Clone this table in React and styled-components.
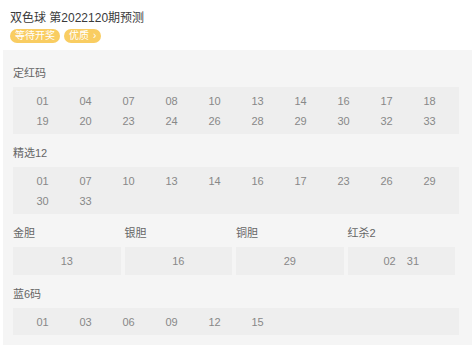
import React from "react";
import styled, { createGlobalStyle } from "styled-components";

const Global = createGlobalStyle`
  html, body { margin: 0; padding: 0; background: #ffffff; }
  body { font-family: "Liberation Sans", "Noto Sans CJK SC", sans-serif; width: 474px; height: 348px; overflow: hidden; }
`;

const Page = styled.div`
  display: flex;
  flex-direction: column;
  height: 348px;
`;

const Header = styled.div`
  padding: 10px 10px 0 10px;
  height: 50px;
  box-sizing: border-box;
`;

const Title = styled.div`
  font-size: 12px;
  line-height: 16px;
  color: #3a3a3a;
`;

const Badges = styled.div`
  display: flex;
  gap: 4px;
  margin-top: 3px;
`;

const Badge = styled.span`
  display: inline-flex;
  align-items: center;
  height: 14px;
  padding: 0 5px;
  border-radius: 7px;
  background: #f9cd62;
  color: #ffffff;
  font-size: 10px;
  line-height: 14px;
`;

const Chevron = styled.span`
  margin-left: 4px;
  font-size: 10px;
`;

const Panel = styled.div`
  margin: 0 2px 0 3px;
  background: #f5f5f5;
  padding: 14px 13px 10px 10px;
  display: flex;
  flex-direction: column;
  gap: 10px;
`;

const Section = styled.div`
  display: flex;
  flex-direction: column;
`;

const Label = styled.div`
  font-size: 11px;
  line-height: 18px;
  color: #666;
  margin-bottom: 5px;
`;

const NumBox = styled.div`
  background: #eeeeee;
  padding: 4px 8px 3px;
  display: flex;
  flex-wrap: wrap;
`;

const Num = styled.span`
  width: 10%;
  text-align: center;
  font-size: 11px;
  line-height: 20px;
  color: #888;
`;

const Quad = styled.div`
  display: grid;
  grid-template-columns: repeat(4, 1fr);
`;

const QuadCell = styled.div`
  padding-right: 4px;
  display: flex;
  flex-direction: column;
`;

const ValueBox = styled.div`
  background: #eeeeee;
  height: 28px;
  line-height: 28px;
  text-align: center;
  font-size: 11px;
  color: #888;
  word-spacing: 8px;
`;

const red = ["01","04","07","08","10","13","14","16","17","18","19","20","23","24","26","28","29","30","32","33"];
const pick = ["01","07","10","13","14","16","17","23","26","29","30","33"];
const blue = ["01","03","06","09","12","15"];
const quads = [
  { label: "金胆", value: "13" },
  { label: "银胆", value: "16" },
  { label: "铜胆", value: "29" },
  { label: "红杀2", value: "02 31" },
];

export default function App() {
  return (
    <Page>
      <Global />
      <Header>
        <Title>双色球 第2022120期预测</Title>
        <Badges>
          <Badge>等待开奖</Badge>
          <Badge>优质<Chevron>›</Chevron></Badge>
        </Badges>
      </Header>
      <Panel>
        <Section>
          <Label>定红码</Label>
          <NumBox>{red.map((n) => <Num key={n}>{n}</Num>)}</NumBox>
        </Section>
        <Section>
          <Label>精选12</Label>
          <NumBox>{pick.map((n) => <Num key={n}>{n}</Num>)}</NumBox>
        </Section>
        <Quad>
          {quads.map((q) => (
            <QuadCell key={q.label}>
              <Label>{q.label}</Label>
              <ValueBox>{q.value}</ValueBox>
            </QuadCell>
          ))}
        </Quad>
        <Section>
          <Label>蓝6码</Label>
          <NumBox>{blue.map((n) => <Num key={n}>{n}</Num>)}</NumBox>
        </Section>
      </Panel>
    </Page>
  );
}
